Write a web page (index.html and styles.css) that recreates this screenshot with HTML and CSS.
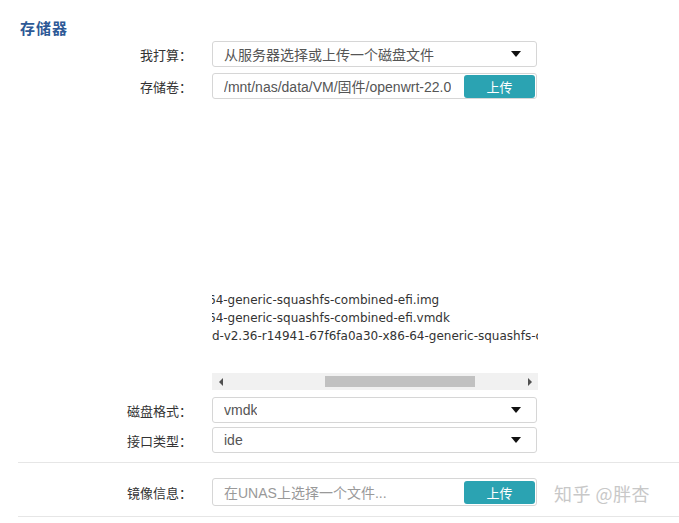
FILE: index.html
```html
<!DOCTYPE html>
<html lang="zh-CN">
<head>
<meta charset="utf-8">
<title>存储器</title>
<link rel="stylesheet" href="styles.css">
</head>
<body>
<div class="page">
  <h2 class="title">存储器</h2>

  <div class="row">
    <span class="label">我打算：</span>
    <div class="box select">
      <span class="val">从服务器选择或上传一个磁盘文件</span>
      <span class="caret"></span>
    </div>
  </div>

  <div class="row r-vol">
    <span class="label">存储卷：</span>
    <div class="box upload">
      <span class="val path">/mnt/nas/data/VM/固件/openwrt-22.0</span>
      <span class="btn">上传</span>
    </div>
  </div>

  <div class="list">
    <div class="files">
      <div class="file cut">64-generic-squashfs-combined-efi.img</div>
      <div class="file cut">64-generic-squashfs-combined-efi.vmdk</div>
      <div class="file">d-v2.36-r14941-67f6fa0a30-x86-64-generic-squashfs-combined-efi.img</div>
    </div>
    <div class="hscroll">
      <span class="arrow left"></span>
      <div class="track"><div class="thumb"></div></div>
      <span class="arrow right"></span>
    </div>
  </div>

  <div class="row r-fmt">
    <span class="label">磁盘格式：</span>
    <div class="box select">
      <span class="val">vmdk</span>
      <span class="caret"></span>
    </div>
  </div>

  <div class="row r-bus">
    <span class="label">接口类型：</span>
    <div class="box select">
      <span class="val">ide</span>
      <span class="caret"></span>
    </div>
  </div>

  <div class="section">
    <div class="row r-img">
      <span class="label">镜像信息：</span>
      <div class="box upload tall">
        <span class="val placeholder">在UNAS上选择一个文件...</span>
        <span class="btn">上传</span>
      </div>
    </div>
  </div>
</div>
<div class="watermark">知乎 @胖杏</div>
</body>
</html>
```

FILE: styles.css
```css
html, body {
  margin: 0;
  padding: 0;
  background: #ffffff;
}

body {
  font-family: "Liberation Sans", "Noto Sans CJK SC", sans-serif;
  color: #333333;
  width: 679px;
  height: 523px;
  overflow: hidden;
  position: relative;
}

.page {
  padding: 18px 0 0 18px;
}

.title {
  margin: 0 0 3px 2px;
  font-family: "Noto Sans CJK SC", sans-serif;
  font-size: 15px;
  line-height: 20px;
  font-weight: 700;
  letter-spacing: 1px;
  color: #2d5996;
}

.row {
  display: flex;
  align-items: center;
  gap: 20px;
  margin-bottom: 6px;
}

.row.r-vol {
  margin-bottom: 0;
}

.label {
  width: 174px;
  text-align: right;
  font-family: "Noto Sans CJK SC", sans-serif;
  font-size: 13px;
  color: #333333;
  white-space: nowrap;
}

.box {
  box-sizing: border-box;
  width: 325px;
  height: 26px;
  border: 1px solid #d6d6d6;
  border-radius: 3px;
  display: flex;
  align-items: center;
  justify-content: space-between;
  padding: 0 15px 0 11px;
  font-size: 14px;
  color: #555555;
  background: #ffffff;
}

.box.upload {
  padding-right: 1px;
}

.box.tall {
  height: 28px;
}

.val {
  white-space: nowrap;
  overflow: hidden;
}

.select .val {
  font-family: "Noto Sans CJK SC", "Liberation Sans", sans-serif;
  font-size: 14px;
}

.r-fmt .val, .r-bus .val {
  font-family: "Liberation Sans", sans-serif;
}

.path {
  font-family: "Liberation Sans", "Noto Sans CJK SC", sans-serif;
}

.placeholder {
  color: #999999;
  font-family: "Liberation Sans", "Noto Sans CJK SC", sans-serif;
}

.caret {
  width: 0;
  height: 0;
  border-left: 5px solid transparent;
  border-right: 5px solid transparent;
  border-top: 6px solid #111111;
}

.btn {
  flex: none;
  width: 71px;
  height: 23px;
  border-radius: 3px;
  background: #2ba3b2;
  color: #ffffff;
  font-family: "Noto Sans CJK SC", sans-serif;
  font-size: 13px;
  display: flex;
  align-items: center;
  justify-content: center;
}

.list {
  margin-left: 194px;
  width: 326px;
}

.files {
  overflow: hidden;
  padding: 192px 0 28px 0;
}

.file {
  font-family: "DejaVu Sans", sans-serif;
  font-size: 12px;
  line-height: 18px;
  color: #333333;
  white-space: nowrap;
}

.file.cut {
  margin-left: -4px;
}

.hscroll {
  height: 17px;
  background: #f1f1f1;
  display: flex;
  align-items: center;
}

.arrow {
  flex: none;
  width: 17px;
  height: 17px;
  display: flex;
  align-items: center;
  justify-content: center;
  box-sizing: border-box;
}

.arrow.left::before {
  content: "";
  border-top: 4px solid transparent;
  border-bottom: 4px solid transparent;
  border-right: 4px solid #505050;
}

.arrow.right::before {
  content: "";
  border-top: 4px solid transparent;
  border-bottom: 4px solid transparent;
  border-left: 4px solid #505050;
}

.track {
  flex: 1;
  height: 11px;
  display: flex;
  padding-left: 96px;
}

.thumb {
  width: 150px;
  height: 11px;
  background: #c1c1c1;
}

.r-fmt {
  margin-top: 7px;
  margin-bottom: 4px;
}

.r-bus {
  margin-bottom: 0;
}

.section {
  margin-top: 9px;
  border-top: 1px solid #e6e6e6;
  border-bottom: 1px solid #e6e6e6;
  padding: 15px 0 10px 0;
}

.section .row {
  margin-bottom: 0;
}

.watermark {
  position: absolute;
  left: 554px;
  top: 481px;
  font-family: "Noto Sans CJK SC", sans-serif;
  font-size: 18px;
  line-height: 24px;
  color: #c8c8c8;
  letter-spacing: 0.5px;
}
```
